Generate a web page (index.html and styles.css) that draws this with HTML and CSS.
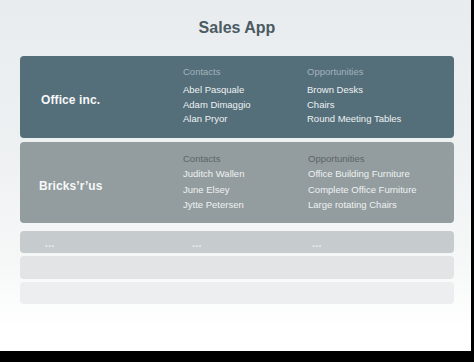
FILE: index.html
```html
<!DOCTYPE html>
<html>
<head>
<meta charset="utf-8">
<link rel="stylesheet" href="styles.css">
</head>
<body>
<div class="screen">
  <h1 class="title">Sales App</h1>
  <div class="list">
    <div class="card card-primary">
      <div class="company">Office inc.</div>
      <div class="col">
        <div class="col-head">Contacts</div>
        <div class="item">Abel Pasquale</div>
        <div class="item">Adam Dimaggio</div>
        <div class="item">Alan Pryor</div>
      </div>
      <div class="col">
        <div class="col-head">Opportunities</div>
        <div class="item">Brown Desks</div>
        <div class="item">Chairs</div>
        <div class="item">Round Meeting Tables</div>
      </div>
    </div>
    <div class="card card-secondary">
      <div class="company">Bricks’r’us</div>
      <div class="col">
        <div class="col-head">Contacts</div>
        <div class="item">Juditch Wallen</div>
        <div class="item">June Elsey</div>
        <div class="item">Jytte Petersen</div>
      </div>
      <div class="col">
        <div class="col-head">Opportunities</div>
        <div class="item">Office Building Furniture</div>
        <div class="item">Complete Office Furniture</div>
        <div class="item">Large rotating Chairs</div>
      </div>
    </div>
    <div class="card card-more">
      <div class="dots">...</div>
      <div class="dots">...</div>
      <div class="dots">...</div>
    </div>
    <div class="card card-ghost1"></div>
    <div class="card card-ghost2"></div>
  </div>
</div>
</body>
</html>
```

FILE: styles.css
```css
html, body {
  margin: 0;
  padding: 0;
}
body {
  background: #000;
  width: 474px;
  height: 362px;
  overflow: hidden;
  font-family: "Liberation Sans", Arial, sans-serif;
}
.screen {
  width: 471px;
  height: 351px;
  background: linear-gradient(180deg, #e8ecee 0px, #eef1f2 150px, #f6f8f8 260px, #ffffff 330px);
  overflow: hidden;
}
.title {
  margin: 0;
  height: 56px;
  display: flex;
  align-items: center;
  justify-content: center;
  padding-left: 3px;
  box-sizing: border-box;
  font-size: 16px;
  font-weight: bold;
  color: #4a5a62;
}
.list {
  width: 434px;
  margin-left: 20px;
  display: flex;
  flex-direction: column;
}
.card {
  border-radius: 4px;
  box-sizing: border-box;
}
.card-primary,
.card-secondary {
  display: grid;
  align-items: center;
}
.card-primary {
  background: #546e7a;
  height: 82px;
  grid-template-columns: 142px 124px 1fr;
  padding-left: 21px;
}
.card-secondary {
  background: #939c9e;
  height: 81px;
  margin-top: 4px;
  grid-template-columns: 144px 124px 1fr;
  padding-left: 19px;
}
.company {
  font-size: 12px;
  font-weight: bold;
  color: #f6f8f9;
  letter-spacing: 0.1px;
}
.card-primary .company {
  padding-top: 6px;
}
.card-secondary .company {
  padding-top: 7px;
}
.col {
  font-size: 9.5px;
  color: #eef2f3;
}
.card-primary .col {
  line-height: 14.5px;
  padding-bottom: 2px;
}
.card-primary .col-head {
  color: #a2b4bc;
  line-height: 14px;
  margin-bottom: 4px;
}
.card-secondary .col {
  line-height: 15.5px;
}
.card-secondary .col + .col {
  padding-left: 1px;
}
.card-secondary .col-head {
  color: #5b6569;
  line-height: 14px;
}
.card-more {
  background: #c6cbce;
  height: 22px;
  margin-top: 8px;
  display: grid;
  grid-template-columns: 147px 120px 1fr;
  align-items: center;
  padding-left: 25px;
  padding-top: 3px;
}
.dots {
  font-size: 10px;
  font-weight: bold;
  color: #eef0f1;
  letter-spacing: 0.5px;
}
.card-ghost1 {
  background: #e2e4e6;
  height: 23px;
  margin-top: 3px;
}
.card-ghost2 {
  background: #eceeef;
  height: 22px;
  margin-top: 3px;
}
```
